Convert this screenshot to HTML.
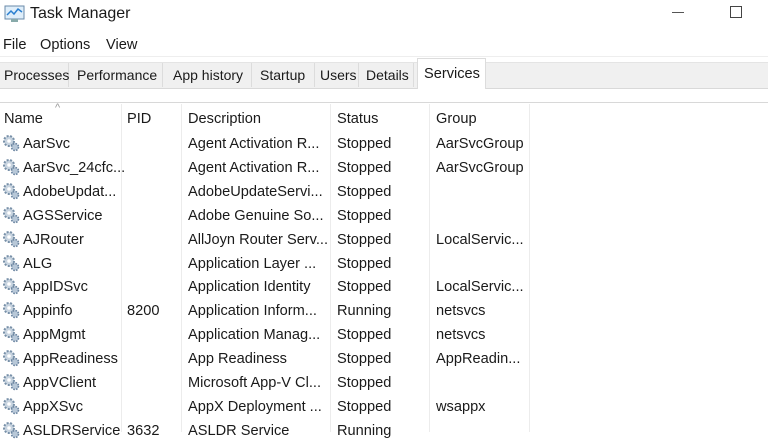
<!DOCTYPE html><html><head><style>
body{margin:0;width:768px;height:432px;overflow:hidden;background:#fff;font-family:"Liberation Sans",sans-serif;color:#1a1a1a;position:relative}
.a{position:absolute;white-space:nowrap;font-size:14.6px;line-height:18px}
.tabs{position:absolute;left:0;top:62px;width:768px;height:25px;background:#f0f0f0;border-top:1px solid #e4e4e4;border-bottom:1px solid #d9d9d9}
.tab{position:absolute;top:63px;height:24px;font-size:14px;line-height:25px;border-right:1px solid #dcdcdc;padding-left:4px;white-space:nowrap}
.sep{position:absolute;top:104px;width:1px;height:328px;background:#ececec}
.ico{position:absolute;left:2px;width:18px;height:18px}
</style></head><body>
<svg style="position:absolute;left:4px;top:5px" width="22" height="18" viewBox="0 0 22 18"><rect x="1" y="1" width="19" height="13" fill="#dfeefa" stroke="#6a8aa8"/><polyline points="3,10 7,6 10,9 14,4 18,7" fill="none" stroke="#2a7fd0" stroke-width="1.5"/><rect x="7" y="14" width="7" height="3" fill="#8aa"/></svg>
<div class="a" style="left:30px;top:5px;font-size:16px">Task Manager</div>
<div style="position:absolute;left:672px;top:12px;width:12px;height:1px;background:#555"></div>
<div style="position:absolute;left:730px;top:6px;width:10px;height:10px;border:1px solid #444"></div>
<div class="a" style="left:3px;top:36px">File</div>
<div class="a" style="left:40px;top:36px">Options</div>
<div class="a" style="left:106px;top:36px">View</div>
<div style="position:absolute;left:0;top:56px;width:768px;height:1px;background:#eee"></div>
<div class="tabs"></div>
<div class="tab" style="left:0;width:64px">Processes</div>
<div class="tab" style="left:73px;width:85px">Performance</div>
<div class="tab" style="left:169px;width:78px">App history</div>
<div class="tab" style="left:256px;width:54px">Startup</div>
<div class="tab" style="left:316px;width:38px">Users</div>
<div class="tab" style="left:362px;width:47px">Details</div>
<div style="position:absolute;left:417px;top:58px;width:67px;height:30px;background:#fff;border:1px solid #dcdcdc;border-bottom:none"></div>
<div class="a" style="left:424px;top:65px">Services</div>
<div style="position:absolute;left:0;top:102px;width:768px;height:1px;background:#d8d8d8"></div>
<div class="a" style="left:55px;top:99px;font-size:11px;color:#999">^</div>
<div class="sep" style="left:121px"></div><div class="sep" style="left:181px"></div><div class="sep" style="left:330px"></div><div class="sep" style="left:429px"></div><div class="sep" style="left:529px"></div>
<div class="a" style="left:4px;top:110px">Name</div><div class="a" style="left:127px;top:110px">PID</div><div class="a" style="left:188px;top:110px">Description</div><div class="a" style="left:337px;top:110px">Status</div><div class="a" style="left:436px;top:110px">Group</div>
<div id="rows"></div>
<script>
var d=[["AarSvc","","Agent Activation R...","Stopped","AarSvcGroup"],["AarSvc_24cfc...","","Agent Activation R...","Stopped","AarSvcGroup"],["AdobeUpdat...","","AdobeUpdateServi...","Stopped",""],["AGSService","","Adobe Genuine So...","Stopped",""],["AJRouter","","AllJoyn Router Serv...","Stopped","LocalServic..."],["ALG","","Application Layer ...","Stopped",""],["AppIDSvc","","Application Identity","Stopped","LocalServic..."],["Appinfo","8200","Application Inform...","Running","netsvcs"],["AppMgmt","","Application Manag...","Stopped","netsvcs"],["AppReadiness","","App Readiness","Stopped","AppReadin..."],["AppVClient","","Microsoft App-V Cl...","Stopped",""],["AppXSvc","","AppX Deployment ...","Stopped","wsappx"],["ASLDRService","3632","ASLDR Service","Running",""]];
var h="";d.forEach(function(r,i){var t=135+i*23.9;
h+='<svg class="ico" style="top:'+(t-1)+'px" viewBox="0 0 18 18"><circle cx="7" cy="7" r="5" fill="#c8d4e0" stroke="#7890a8" stroke-width="2" stroke-dasharray="2 1.5"/><circle cx="7" cy="7" r="1.8" fill="#fff"/><circle cx="13" cy="13" r="3.5" fill="#b8c8d8" stroke="#6a84a0" stroke-width="1.6" stroke-dasharray="1.6 1.2"/></svg>';
var x=[23,127,188,337,436];r.forEach(function(c,j){h+='<div class="a" style="left:'+x[j]+'px;top:'+t+'px">'+c+'</div>'})});
document.getElementById("rows").innerHTML=h;
</script>
</body></html>
